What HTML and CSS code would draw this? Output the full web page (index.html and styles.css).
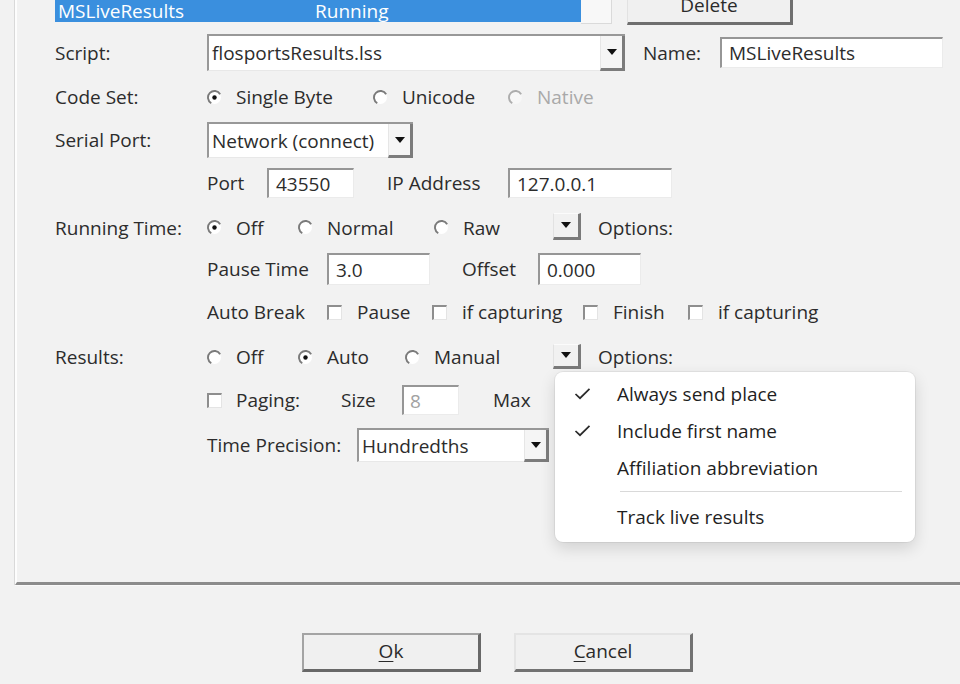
FILE: index.html
```html
<!DOCTYPE html>
<html>
<head>
<meta charset="utf-8">
<link rel="stylesheet" href="styles.css">
</head>
<body>
<div class="group">
  <div class="form">
    <div class="row row0">
      <div class="listbox">
        <div class="lb-sel"><span class="lb-c1">MSLiveResults</span><span>Running</span></div>
        <div class="lb-rest"></div>
      </div>
      <div class="btn btn-delete">Delete</div>
    </div>

    <div class="row row1">
      <div class="lbl">Script:</div>
      <div class="combo combo-script">
        <div class="combo-text">flosportsResults.lss</div>
        <div class="combo-btn"><svg class="arrow" viewBox="0 0 10 6"><polygon points="0,0 10,0 5,6" fill="#111"/></svg></div>
      </div>
      <div class="txt lbl-name">Name:</div>
      <div class="field field-name">MSLiveResults</div>
    </div>

    <div class="row row2">
      <div class="lbl">Code Set:</div>
      <div class="opt w166"><svg class="rb" viewBox="0 0 15 15"><circle cx="7.5" cy="7.5" r="6.5" fill="#fff"/><path d="M4.25 13.13 A6.5 6.5 0 1 1 13.13 4.25" stroke="#7a7a7a" stroke-width="1.9" fill="none"/><circle cx="7.5" cy="7.5" r="2.2" fill="#111"/></svg><span>Single Byte</span></div>
      <div class="opt w135"><svg class="rb" viewBox="0 0 15 15"><circle cx="7.5" cy="7.5" r="6.5" fill="#fff"/><path d="M4.25 13.13 A6.5 6.5 0 1 1 13.13 4.25" stroke="#7a7a7a" stroke-width="1.9" fill="none"/></svg><span>Unicode</span></div>
      <div class="opt disabled"><svg class="rb" viewBox="0 0 15 15"><circle cx="7.5" cy="7.5" r="6.5" fill="#f7f7f7"/><path d="M4.25 13.13 A6.5 6.5 0 1 1 13.13 4.25" stroke="#adadad" stroke-width="1.9" fill="none"/></svg><span>Native</span></div>
    </div>

    <div class="row row3">
      <div class="lbl">Serial Port:</div>
      <div class="combo combo-serial">
        <div class="combo-text">Network (connect)</div>
        <div class="combo-btn"><svg class="arrow" viewBox="0 0 10 6"><polygon points="0,0 10,0 5,6" fill="#111"/></svg></div>
      </div>
    </div>

    <div class="row row4">
      <div class="lbl"></div>
      <div class="txt w60">Port</div>
      <div class="field field-port">43550</div>
      <div class="txt lbl-ip">IP Address</div>
      <div class="field field-ip">127.0.0.1</div>
    </div>

    <div class="row row5">
      <div class="lbl">Running Time:</div>
      <div class="opt w91"><svg class="rb" viewBox="0 0 15 15"><circle cx="7.5" cy="7.5" r="6.5" fill="#fff"/><path d="M4.25 13.13 A6.5 6.5 0 1 1 13.13 4.25" stroke="#7a7a7a" stroke-width="1.9" fill="none"/><circle cx="7.5" cy="7.5" r="2.2" fill="#111"/></svg><span>Off</span></div>
      <div class="opt w136"><svg class="rb" viewBox="0 0 15 15"><circle cx="7.5" cy="7.5" r="6.5" fill="#fff"/><path d="M4.25 13.13 A6.5 6.5 0 1 1 13.13 4.25" stroke="#7a7a7a" stroke-width="1.9" fill="none"/></svg><span>Normal</span></div>
      <div class="opt w119"><svg class="rb" viewBox="0 0 15 15"><circle cx="7.5" cy="7.5" r="6.5" fill="#fff"/><path d="M4.25 13.13 A6.5 6.5 0 1 1 13.13 4.25" stroke="#7a7a7a" stroke-width="1.9" fill="none"/></svg><span>Raw</span></div>
      <div class="dd dd-run"><svg class="arrow" viewBox="0 0 10 6"><polygon points="0,0 10,0 5,6" fill="#111"/></svg></div>
      <div class="txt lbl-opt">Options:</div>
    </div>

    <div class="row row6">
      <div class="lbl"></div>
      <div class="txt w120">Pause Time</div>
      <div class="field field-num">3.0</div>
      <div class="txt lbl-offset">Offset</div>
      <div class="field field-num">0.000</div>
    </div>

    <div class="row row7">
      <div class="lbl"></div>
      <div class="txt w120">Auto Break</div>
      <div class="opt w105"><span class="cb"></span><span class="cbt">Pause</span></div>
      <div class="opt w151"><span class="cb"></span><span class="cbt">if capturing</span></div>
      <div class="opt w105"><span class="cb"></span><span class="cbt">Finish</span></div>
      <div class="opt"><span class="cb"></span><span class="cbt">if capturing</span></div>
    </div>

    <div class="row row8">
      <div class="lbl">Results:</div>
      <div class="opt w91"><svg class="rb" viewBox="0 0 15 15"><circle cx="7.5" cy="7.5" r="6.5" fill="#fff"/><path d="M4.25 13.13 A6.5 6.5 0 1 1 13.13 4.25" stroke="#7a7a7a" stroke-width="1.9" fill="none"/></svg><span>Off</span></div>
      <div class="opt w107"><svg class="rb" viewBox="0 0 15 15"><circle cx="7.5" cy="7.5" r="6.5" fill="#fff"/><path d="M4.25 13.13 A6.5 6.5 0 1 1 13.13 4.25" stroke="#7a7a7a" stroke-width="1.9" fill="none"/><circle cx="7.5" cy="7.5" r="2.2" fill="#111"/></svg><span>Auto</span></div>
      <div class="opt w148"><svg class="rb" viewBox="0 0 15 15"><circle cx="7.5" cy="7.5" r="6.5" fill="#fff"/><path d="M4.25 13.13 A6.5 6.5 0 1 1 13.13 4.25" stroke="#7a7a7a" stroke-width="1.9" fill="none"/></svg><span>Manual</span></div>
      <div class="dd dd-res"><svg class="arrow" viewBox="0 0 10 6"><polygon points="0,0 10,0 5,6" fill="#111"/></svg></div>
      <div class="txt lbl-opt">Options:</div>
    </div>

    <div class="row row9">
      <div class="lbl"></div>
      <div class="opt w134"><span class="cb"></span><span class="cbt2">Paging:</span></div>
      <div class="txt w61">Size</div>
      <div class="field field-size"><span class="gray">8</span></div>
      <div class="txt lbl-max">Max</div>
    </div>

    <div class="row row10">
      <div class="lbl"></div>
      <div class="txt w150">Time Precision:</div>
      <div class="combo combo-prec">
        <div class="combo-text">Hundredths</div>
        <div class="combo-btn"><svg class="arrow" viewBox="0 0 10 6"><polygon points="0,0 10,0 5,6" fill="#111"/></svg></div>
      </div>
    </div>
  </div>
</div>

<div class="buttons">
  <div class="btn btn-ok"><u>O</u>k</div>
  <div class="btn btn-cancel"><u>C</u>ancel</div>
</div>

<div class="menu">
  <div class="mi"><span class="mchk"><svg viewBox="0 0 17 13"><path d="M1.5 7 L6 11.2 L15.5 1.8" stroke="#2a2a2a" stroke-width="1.7" fill="none"/></svg></span><span>Always send place</span></div>
  <div class="mi"><span class="mchk"><svg viewBox="0 0 17 13"><path d="M1.5 7 L6 11.2 L15.5 1.8" stroke="#2a2a2a" stroke-width="1.7" fill="none"/></svg></span><span>Include first name</span></div>
  <div class="mi"><span class="mchk"></span><span>Affiliation abbreviation</span></div>
  <div class="msep"></div>
  <div class="mi"><span class="mchk"></span><span>Track live results</span></div>
</div>
</body>
</html>
```

FILE: styles.css
```css
html, body {
  margin: 0;
  padding: 0;
}
body {
  width: 960px;
  height: 684px;
  overflow: hidden;
  background: #f2f2f2;
  font-family: "Open Sans", "Noto Sans", sans-serif;
  font-size: 19px;
  color: #2c2c2c;
  position: relative;
}

.group {
  margin-left: 15px;
  height: 582px;
  border-left: 2px solid #fdfdfd;
  border-bottom: 3px solid #8c8c8c;
  box-shadow: -1px 0 0 #d9d9d9, 0 1px 0 #fafafa;
  padding-left: 38px;
}

.form {
  display: flex;
  flex-direction: column;
}

.row {
  display: flex;
  align-items: center;
  white-space: nowrap;
}
.row0 { height: 30px; align-items: flex-start; }
.row1 { height: 45px; }
.row2 { height: 44px; }
.row3 { height: 42px; }
.row4 { height: 44px; }
.row5 { height: 45px; }
.row6 { height: 38px; }
.row7 { height: 48px; }
.row8 { height: 42px; }
.row9 { height: 44px; }
.row10 { height: 46px; }

.lbl {
  width: 152px;
  flex-shrink: 0;
}

/* listbox */
.listbox {
  display: flex;
  width: 557px;
  height: 24px;
}
.lb-sel {
  width: 527px;
  height: 22px;
  background: #3a8fde;
  color: #fff;
  display: flex;
  align-items: center;
  padding-left: 3px;
  box-sizing: border-box;
  line-height: 22px;
}
.lb-c1 { width: 257px; }
.lb-rest {
  width: 30px;
  height: 23px;
  background: #f8f8f8;
  border-right: 1px solid #dadada;
  border-bottom: 1px solid #dadada;
}

/* buttons */
.btn {
  box-sizing: border-box;
  background: #f0f0f0;
  display: flex;
  align-items: center;
  justify-content: center;
  color: #2a2a2a;
}
.btn-delete {
  width: 166px;
  height: 41px;
  margin-top: -16px;
  margin-left: 15px;
  padding-top: 3px;
  border-top: 1px solid #e2e2e2;
  border-left: 1px solid #e2e2e2;
  border-right: 3px solid #6f6f6f;
  border-bottom: 3px solid #6f6f6f;
}

.buttons {
  display: flex;
  gap: 33px;
  padding-left: 302px;
  margin-top: 48px;
}
.btn-ok, .btn-cancel {
  width: 179px;
  height: 39px;
  padding-bottom: 2px;
}
.btn-ok {
  border-top: 2px solid #a4a4a4;
  border-left: 2px solid #a4a4a4;
  border-right: 3px solid #686868;
  border-bottom: 3px solid #686868;
}
.btn-cancel {
  border-top: 2px solid #e4e4e4;
  border-left: 2px solid #e4e4e4;
  border-right: 3px solid #727272;
  border-bottom: 3px solid #727272;
}
.btn u { text-underline-offset: 3px; text-decoration-thickness: 1px; }

/* combos */
.combo {
  display: flex;
  box-sizing: border-box;
  background: #fff;
  border-top: 2px solid #989898;
  border-left: 2px solid #989898;
  border-bottom: 1px solid #e8e8e8;
}
.combo-text {
  flex: 1;
  padding-left: 3px;
  display: flex;
  align-items: center;
}
.combo-btn {
  width: 25px;
  box-sizing: border-box;
  background: #f5f5f5;
  border-left: 1px solid #e6e6e6;
  border-right: 3px solid #7c7c7c;
  border-bottom: 3px solid #7c7c7c;
  margin-bottom: -1px;
  display: flex;
  align-items: center;
  justify-content: center;
}
.arrow {
  width: 10px;
  height: 6px;
}
.combo-script { width: 418px; height: 37px; }
.combo-serial { width: 206px; height: 36px; }
.combo-prec { width: 192px; height: 34px; }

/* text fields */
.field {
  box-sizing: border-box;
  height: 31px;
  background: #fff;
  border-top: 2px solid #969696;
  border-left: 2px solid #969696;
  border-bottom: 1px solid #ebebeb;
  border-right: 1px solid #ebebeb;
  padding-left: 7px;
  display: flex;
  align-items: center;
}
.field-name { width: 223px; }
.field-port { width: 87px; height: 30px; }
.field-ip { width: 164px; height: 30px; }
.field-num { width: 103px; height: 32px; }
.field-size { width: 57px; height: 30px; padding-left: 6px; }
.gray { color: #a2a2a2; }

/* plain text */
.txt { flex-shrink: 0; }
.lbl-name { margin-left: 18px; width: 77px; }
.w60 { width: 60px; }
.lbl-ip { margin-left: 33px; width: 121px; }
.w120 { width: 120px; }
.lbl-offset { margin-left: 32px; width: 76px; }
.lbl-opt { margin-left: 17px; }
.w61 { width: 61px; }
.lbl-max { margin-left: 34px; }
.w150 { width: 150px; }

/* options */
.opt {
  display: flex;
  align-items: center;
  flex-shrink: 0;
}
.rb {
  width: 15px;
  height: 15px;
  margin-right: 14px;
  flex-shrink: 0;
}
.disabled { color: #a9a9a9; }
.w166 { width: 166px; }
.w135 { width: 135px; }
.w91 { width: 91px; }
.w136 { width: 136px; }
.w119 { width: 119px; }
.w107 { width: 107px; }
.w148 { width: 148px; }
.w105 { width: 105px; }
.w151 { width: 151px; }
.w134 { width: 134px; }

.cb {
  width: 15px;
  height: 15px;
  box-sizing: border-box;
  background: #fff;
  border-top: 2px solid #8e8e8e;
  border-left: 2px solid #8e8e8e;
  border-bottom: 1px solid #e4e4e4;
  border-right: 1px solid #e4e4e4;
  flex-shrink: 0;
}
.cbt { margin-left: 15px; }
.cbt2 { margin-left: 14px; }

/* dropdown buttons */
.dd {
  width: 28px;
  box-sizing: border-box;
  background: #f1f1f1;
  border-top: 1px solid #fbfbfb;
  border-left: 1px solid #e2e2e2;
  border-right: 3px solid #7a7a7a;
  border-bottom: 3px solid #7a7a7a;
  display: flex;
  align-items: center;
  justify-content: center;
  flex-shrink: 0;
}
.dd-run { height: 27px; margin-top: -3px; }
.dd-res { height: 25px; margin-top: -2px; }

/* popup menu */
.menu {
  position: absolute;
  left: 555px;
  top: 372px;
  width: 360px;
  height: 170px;
  box-sizing: border-box;
  background: #fff;
  border-radius: 8px;
  box-shadow: 0 6px 16px rgba(0, 0, 0, 0.14), 0 0 0 1px rgba(0, 0, 0, 0.05);
  padding-top: 3px;
  color: #1f1f1f;
}
.mi {
  height: 37px;
  display: flex;
  align-items: center;
  white-space: nowrap;
}
.mchk {
  width: 62px;
  flex-shrink: 0;
  display: flex;
  align-items: center;
}
.mchk svg {
  width: 17px;
  height: 13px;
  margin-left: 19px;
}
.msep {
  height: 1px;
  background: #d9d9d9;
  margin: 5px 13px 6px 65px;
}
```
